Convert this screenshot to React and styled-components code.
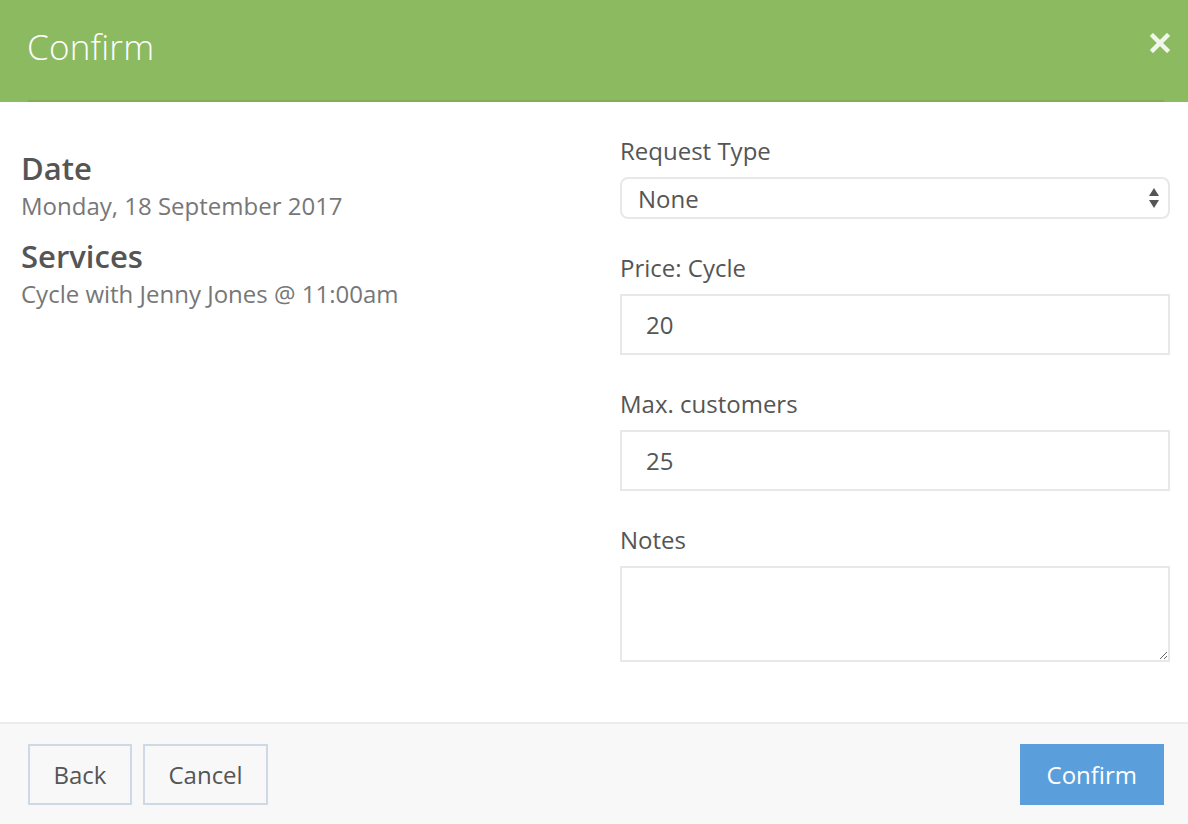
import React from "react";
import styled, { createGlobalStyle } from "styled-components";

const GlobalStyle = createGlobalStyle`
  html, body {
    margin: 0;
    padding: 0;
    background: #ffffff;
  }
  body {
    font-family: "Open Sans", "Noto Sans", sans-serif;
    color: #555555;
  }
  * {
    box-sizing: border-box;
  }
`;

export default function App() {
  return (
    <>
      <GlobalStyle />
      <Modal>
        <Header>
          <Title>Confirm</Title>
          <CloseButton type="button" aria-label="Close">
            <svg width="20" height="20" viewBox="0 0 20 20">
              <path
                d="M3 3 L17 17 M17 3 L3 17"
                stroke="#f1f6ea"
                strokeWidth="4.5"
                strokeLinecap="square"
              />
            </svg>
          </CloseButton>
          <HeaderRule />
        </Header>

        <Body>
          <Summary>
            <Heading>Date</Heading>
            <Detail>Monday, 18 September 2017</Detail>
            <Heading>Services</Heading>
            <Detail>Cycle with Jenny Jones @ 11:00am</Detail>
          </Summary>

          <Form>
            <Field>
              <Label>Request Type</Label>
              <SelectWrap>
                <Select defaultValue="none">
                  <option value="none">None</option>
                  <option value="standard">Standard</option>
                </Select>
                <Arrows width="12" height="22" viewBox="0 0 12 22">
                  <path d="M6 1 L11 9 L1 9 Z" fill="#555" />
                  <path d="M6 21 L11 13 L1 13 Z" fill="#555" />
                </Arrows>
              </SelectWrap>
            </Field>
            <Field>
              <Label>Price: Cycle</Label>
              <Input defaultValue="20" />
            </Field>
            <Field>
              <Label>Max. customers</Label>
              <Input defaultValue="25" />
            </Field>
            <Field>
              <Label>Notes</Label>
              <TextArea />
            </Field>
          </Form>
        </Body>

        <Footer>
          <ButtonGroup>
            <Button type="button">Back</Button>
            <Button type="button">Cancel</Button>
          </ButtonGroup>
          <Button type="button" primary>
            Confirm
          </Button>
        </Footer>
      </Modal>
    </>
  );
}

const Modal = styled.div`
  width: 1188px;
  height: 824px;
  display: flex;
  flex-direction: column;
  overflow: hidden;
  background: #ffffff;
`;

const Header = styled.div`
  position: relative;
  flex: none;
  height: 102px;
  background: #8cba60;
  display: flex;
  align-items: center;
  justify-content: space-between;
  padding: 0 18px 10px 27px;
`;

const HeaderRule = styled.div`
  position: absolute;
  left: 28px;
  right: 24px;
  bottom: 0;
  height: 2px;
  background: #80ad55;
`;

const Title = styled.h1`
  margin: 0;
  font-size: 35px;
  font-weight: 300;
  color: #ffffff;
  letter-spacing: 0.2px;
`;

const CloseButton = styled.button`
  border: none;
  background: none;
  padding: 0;
  margin-top: -6px;
  cursor: pointer;
  display: flex;
`;

const Body = styled.div`
  flex: 1;
  display: grid;
  grid-template-columns: 1fr 550px;
  padding: 36px 18px 0 21px;
`;

const Summary = styled.div`
  padding-top: 12px;
`;

const Heading = styled.h2`
  margin: 0;
  font-size: 31px;
  font-weight: 600;
  line-height: 37px;
  color: #555555;
`;

const Detail = styled.p`
  margin: 0 0 14px;
  font-size: 24px;
  line-height: 37px;
  color: #777777;
`;

const Form = styled.div`
  display: flex;
  flex-direction: column;
  gap: 36px;
`;

const Field = styled.div`
  display: flex;
  flex-direction: column;
`;

const Label = styled.label`
  font-size: 24px;
  line-height: 26px;
  color: #555555;
  margin-bottom: 13px;
`;

const SelectWrap = styled.div`
  position: relative;
`;

const Select = styled.select`
  width: 100%;
  height: 42px;
  appearance: none;
  border: 2px solid #e8e8e8;
  border-radius: 8px;
  background: #ffffff;
  padding: 0 16px;
  font-family: "Open Sans", "Noto Sans", sans-serif;
  font-size: 24px;
  color: #555555;
  outline: none;
`;

const Arrows = styled.svg`
  position: absolute;
  right: 10px;
  top: 10px;
  pointer-events: none;
`;

const Input = styled.input`
  width: 100%;
  height: 61px;
  border: 2px solid #e8e8e8;
  border-radius: 0;
  padding: 0 24px;
  font-family: "Open Sans", "Noto Sans", sans-serif;
  font-size: 24px;
  color: #555555;
  outline: none;
`;

const TextArea = styled.textarea`
  display: block;
  width: 100%;
  height: 96px;
  border: 2px solid #e8e8e8;
  border-radius: 0;
  padding: 12px 24px;
  font-family: "Open Sans", "Noto Sans", sans-serif;
  font-size: 24px;
  color: #555555;
  outline: none;
  resize: vertical;
`;

const Footer = styled.div`
  flex: none;
  height: 102px;
  background: #f8f8f8;
  border-top: 2px solid #ececec;
  display: flex;
  justify-content: space-between;
  align-items: flex-start;
  padding: 20px 24px 0 28px;
`;

const ButtonGroup = styled.div`
  display: flex;
  gap: 11px;
`;

const Button = styled.button`
  height: 61px;
  padding: 0 ${(p) => (p.primary ? "25px" : "23.5px")};
  border: 2px solid ${(p) => (p.primary ? "#5a9fdb" : "#cfd9e6")};
  background: ${(p) => (p.primary ? "#5a9fdb" : "#f8f8f8")};
  color: ${(p) => (p.primary ? "#ffffff" : "#555555")};
  font-family: "Open Sans", "Noto Sans", sans-serif;
  font-size: 24px;
  border-radius: 0;
  cursor: pointer;
`;
